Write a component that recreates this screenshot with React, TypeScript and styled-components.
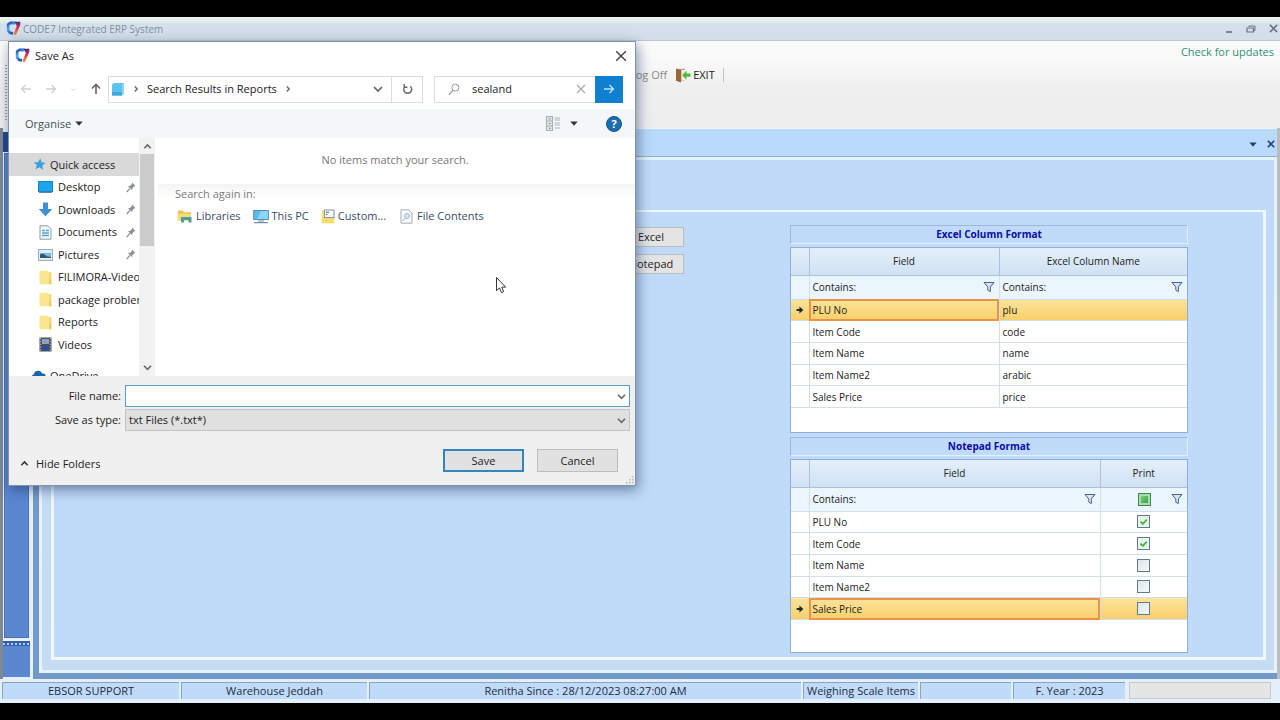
import React from "react";
import styled, { createGlobalStyle } from "styled-components";

const Global = createGlobalStyle`
  * { box-sizing: border-box; }
  body { margin: 0; background: #000; }
  body, button, input, select, table { font: 11px/16px "Open Sans", "Noto Sans", sans-serif; color: #222; }
  button { cursor: default; padding: 0; }
`;

/* ---------- application shell ---------- */

const Shell = styled.div`
  position: relative;
  display: flex;
  flex-direction: column;
  min-height: 100vh;
  padding: 17px 0;
`;

const TitleBar = styled.header`
  display: flex;
  align-items: center;
  height: 24px;
  padding: 0 1px 0 6px;
  gap: 2px;
  border-bottom: 1px solid #b9c9d6;
  background: linear-gradient(#e9f3f1 0, #e3ece9 5px, #d6e0ea 7px, #d2dee9 100%);
  color: #7d909f;
  font-size: 10px;
`;

const Grow = styled.span`
  flex: 1;
`;

const WindowButtons = styled.div`
  display: flex;
  gap: 10px;
`;

const GlyphButton = styled.button<{ $size?: number }>`
  display: flex;
  align-items: center;
  justify-content: center;
  flex: none;
  width: ${(p) => p.$size ?? 12}px;
  height: ${(p) => p.$size ?? 12}px;
  border: 0;
  background: none;
`;

const Ribbon = styled.div`
  display: flex;
  height: 87px;
  padding: 0 6px 0 5px;
  background: linear-gradient(#fbfbfb 0, #fafafa 18px, #efefef 45px, #eeeeee 100%);
`;

const Grip = styled.div`
  width: 2px;
  margin: 24px 623px 8px 0;
  background: repeating-linear-gradient(#9a9a9a 0 1px, transparent 1px 3px);
`;

const RibbonTools = styled.div`
  display: flex;
  align-items: center;
  height: 16px;
  margin-top: 26px;
`;

const ToolButton = styled.button<{ $faded?: boolean }>`
  display: flex;
  align-items: center;
  gap: 2px;
  margin-right: 8px;
  border: 0;
  background: none;
  color: ${(p) => (p.$faded ? "#8b8b8b" : "#222")};
`;

const Divider = styled.span`
  width: 1px;
  height: 14px;
  background: #c4c4c4;
`;

const UpdateLink = styled.a`
  margin-top: 3px;
  color: #2f9079;
  text-decoration: none;
`;

const Workspace = styled.main`
  display: flex;
  flex: 1;
`;

const Dock = styled.aside`
  display: flex;
  flex-direction: column;
  flex: none;
  width: 33px;
  padding: 4px 3px 2px 0;
  border-left: 3px solid #7f8793;
  background: #e6f0fb;
`;

const DockHead = styled.div`
  height: 20px;
  background: #21468f;
`;

const DockBody = styled.div`
  flex: 1;
  margin: 1px 1px 3px;
  border: 1px solid #4a72b8;
  background: #5a87d0;
`;

const DockSplit = styled.div`
  height: 5px;
  background: repeating-linear-gradient(90deg, #b9cdf0 0 2px, transparent 2px 4px) 0 2px / 100% 2px no-repeat, #335fae;
`;

const DockFoot = styled.div`
  height: 31px;
  background: #5a87d0;
`;

const DocColumn = styled.section`
  display: flex;
  flex-direction: column;
  flex: 1;
  border-right: 3px solid #b9bdc0;
`;

const TabStrip = styled.div`
  display: flex;
  align-items: center;
  justify-content: flex-end;
  gap: 6px;
  height: 29px;
  padding-top: 3px;
  border-top: 1px solid #e9f4fd;
  border-bottom: 1px solid #90aecf;
  background: #b9dafa;
`;

const DocFrame = styled.div`
  display: flex;
  flex: 1;
  border: solid #7399c8;
  border-width: 0 0 6px 6px;
`;

const DocPage = styled.div`
  display: flex;
  flex: 1;
  padding: 50px 8px 10px 9px;
  border: 3px solid #e6f3fd;
  background: linear-gradient(#c0daf7 0, #c0daf7 60px, #c6dcf3 100%);
`;

const GroupPanel = styled.div`
  display: flex;
  justify-content: space-between;
  flex: 1;
  padding: 13px 75px 4px 0;
  border: 3px solid #eef8fe;
  border-top-width: 2px;
  background: #c0dbf9;
`;

const ActionColumn = styled.div`
  display: flex;
  flex-direction: column;
  align-items: flex-end;
  gap: 7px;
  width: 630px;
  padding-top: 2px;
`;

const ActionButton = styled.button`
  width: 66px;
  height: 20px;
  border: 1px solid #b9bcc0;
  background: #e4e4e4;
`;

const GridColumn = styled.div`
  display: flex;
  flex-direction: column;
  flex: none;
  width: 398px;
  gap: 4px;
`;

const GridGroup = styled.section`
  display: flex;
  flex-direction: column;
  gap: 3px;
`;

const GridTitle = styled.h2`
  height: 19px;
  margin: 0;
  border: solid;
  border-width: 1px;
  border-color: #9db7d6 #e2f0fd #e2f0fd #9db7d6;
  font-size: 10px;
  line-height: 17px;
  font-weight: 700;
  text-align: center;
  color: #0b0ba8;
`;

const GridBox = styled.div<{ $h: number }>`
  height: ${(p) => p.$h}px;
  border: 1px solid #8fafd6;
  background: #fff;
`;

const Grid = styled.table`
  width: 100%;
  height: 160px;
  border-collapse: collapse;
  table-layout: fixed;

  col.mark { width: 18px; }
  col.name { width: 188px; }
  col.print { width: 87px; }

  th, td {
    padding: 0 0 0 3px;
    border: solid #d3e0ea;
    border-width: 0 1px 1px 0;
    font-size: 10px;
    line-height: 14px;
  }
  th { padding: 0; }
  tr > :last-child { border-right: 0; }
`;

const HeadRow = styled.tr`
  height: 27px;
  background: linear-gradient(#e4effa, #cfe1f4);
  th {
    font-weight: 400;
    border-color: #adc2d8;
  }
`;

const FilterRow = styled.tr`
  height: 24px;
  background: #eaf5fd;
`;

const FilterCell = styled.div<{ $center?: boolean }>`
  display: flex;
  align-items: center;
  justify-content: space-between;
  padding: 0 4px 0 ${(p) => (p.$center ? 34 : 0)}px;
`;

const DataRow = styled.tr<{ $active?: boolean }>`
  background: ${(p) => (p.$active ? "linear-gradient(#fbe39c, #f8cf68)" : "#fff")};
  td:nth-child(2) {
    outline: ${(p) => (p.$active ? "2px solid #e99349" : "none")};
    outline-offset: -2px;
  }
  td:first-child { padding: 0 0 0 5px; }
  td svg { display: block; }
`;

const CheckCell = styled.td`
  && { padding: 0; text-align: center; }
`;

const Tick = styled.input`
  appearance: none;
  display: block;
  width: 13px;
  height: 13px;
  margin: 0 auto;
  border: 1px solid #5f7c93;
  background: linear-gradient(135deg, #dde4ea, #f7f9fa);
  &:checked {
    background: url("data:image/svg+xml,%3Csvg xmlns='http://www.w3.org/2000/svg' viewBox='0 0 11 11'%3E%3Cpath d='M2.5 5.5l2.3 2.3L8.8 3.6' fill='none' stroke='%2345b845' stroke-width='1.9'/%3E%3C/svg%3E") #eaf5ea;
  }
  &.mixed {
    margin: 0;
    border-color: #3d8a4c;
    background: linear-gradient(135deg, #7fd07f, #35a045) 2px 2px / 7px 7px no-repeat, #a9dcae;
  }
`;

const StatusBar = styled.footer`
  display: flex;
  gap: 2px;
  height: 24px;
  padding: 3px 9px 4px 2px;
  background: #e3effa;
`;

const StatusCell = styled.div<{ $w?: number }>`
  flex: ${(p) => (p.$w ? `0 0 ${p.$w}px` : "1 1 0")};
  border: solid #8ea3b9;
  border-width: 1px 0 0 1px;
  background: #c0dbf9;
  text-align: center;
  white-space: nowrap;
  color: #1d2c44;
`;

const StatusProgress = styled.div`
  flex: 0 0 142px;
  margin-left: 2px;
  border: 1px solid #c9c9c9;
  background: #e5e5e5;
`;

/* ---------- save dialog ---------- */

const Dialog = styled.div`
  position: absolute;
  left: 8px;
  top: 41px;
  display: flex;
  flex-direction: column;
  width: 628px;
  border: 1px solid #8493a5;
  background: #fff;
  box-shadow: 2px 4px 12px rgba(20, 40, 80, 0.5);
`;

const DialogTitle = styled.div`
  display: flex;
  align-items: center;
  gap: 5px;
  height: 27px;
  padding: 0 6px;
`;

const NavRow = styled.div`
  display: flex;
  align-items: center;
  height: 40px;
  padding: 0 12px 0 11px;
`;

const NavButtons = styled.div`
  display: flex;
  align-items: center;
  justify-content: space-between;
  flex: none;
  width: 82px;
  margin-right: 6px;
`;

const AddressBar = styled.div`
  display: flex;
  align-items: center;
  gap: 7px;
  flex: none;
  width: 284px;
  height: 27px;
  padding: 0 8px 0 2px;
  border: 1px solid #dcdcdc;
`;

const Refresh = styled.button`
  display: flex;
  align-items: center;
  justify-content: center;
  flex: none;
  width: 32px;
  height: 27px;
  margin: 0 11px 0 -1px;
  border: 1px solid #dcdcdc;
  background: #fff;
`;

const SearchBox = styled.div`
  display: flex;
  align-items: center;
  gap: 12px;
  flex: 1;
  min-width: 0;
  height: 27px;
  padding-left: 13px;
  border: 1px solid #dcdcdc;
`;

const SearchInput = styled.input`
  flex: 1;
  min-width: 0;
  padding: 0;
  border: 0;
  outline: 0;
  background: none;
`;

const GoButton = styled.button`
  display: flex;
  align-items: center;
  justify-content: center;
  flex: none;
  width: 28px;
  height: 27px;
  margin: 0 -1px 0 -4px;
  border: 0;
  background: #0f7fd0;
`;

const CommandBar = styled.div`
  display: flex;
  align-items: center;
  gap: 7px;
  height: 29px;
  padding: 0 13px 0 16px;
  background: #f4f7f7;
`;

const OrganiseButton = styled.button`
  display: flex;
  align-items: center;
  gap: 4px;
  border: 0;
  background: none;
  color: #44505a;
`;

const HelpButton = styled.button`
  width: 16px;
  height: 16px;
  margin-left: 19px;
  border: 1px solid #16558e;
  border-radius: 50%;
  background: #1b6fae;
  color: #fff;
  font-weight: 700;
  line-height: 14px;
`;

const Browser = styled.div`
  display: flex;
  height: 238px;
`;

const FolderPane = styled.nav`
  width: 130px;
  padding-top: 15px;
  overflow: hidden;
`;

const FolderList = styled.ul`
  display: grid;
  grid-template-columns: minmax(0, 1fr);
  grid-auto-rows: 1fr;
  height: 203px;
  margin: 0;
  padding: 0;
  list-style: none;
`;

const FolderRow = styled.li<{ $root?: boolean; $selected?: boolean }>`
  display: flex;
  align-items: center;
  gap: ${(p) => (p.$root ? 4 : 5)}px;
  height: ${(p) => (p.$root ? "23px" : "auto")};
  padding: 0 3px 0 ${(p) => (p.$root ? 24 : 29)}px;
  background: ${(p) => (p.$selected ? "#d9d9d9" : "none")};
  white-space: nowrap;
  svg { flex: none; }
`;

const FolderName = styled.span`
  flex: 1;
  min-width: 0;
`;

const CloudRow = styled(FolderRow)`
  margin-top: 8px;
  padding-left: 22px;
`;

const ScrollTrack = styled.div`
  display: flex;
  flex-direction: column;
  align-items: center;
  width: 16px;
  padding: 4px 0;
  background: #f2f2f2;
`;

const ScrollThumb = styled.div`
  width: 14px;
  height: 92px;
  margin: 3px 0 auto;
  background: #cbcbcb;
`;

const Results = styled.div`
  flex: 1;
`;

const EmptyNote = styled.p`
  height: 46px;
  margin: 0;
  padding-top: 14px;
  text-align: center;
  color: #777;
`;

const SearchAgain = styled.div`
  margin-left: 3px;
  padding: 2px 17px;
  background: linear-gradient(#f4f4f4, #fff 14px);
  color: #7b7b7b;
`;

const PlaceRow = styled.div`
  display: flex;
  gap: 12px;
  margin-top: 6px;
  padding-left: 2px;
`;

const Place = styled.button`
  display: flex;
  align-items: center;
  gap: 3px;
  border: 0;
  background: none;
  color: #3c4b66;
`;

const DialogFoot = styled.div`
  position: relative;
  height: 109px;
  padding: 8px 5px 0 11px;
  background: #f0f0f0;
`;

const Field = styled.div`
  display: grid;
  grid-template-columns: 101px 1fr;
  align-items: center;
  gap: 4px;
  height: 24px;
  label { text-align: right; }
`;

const Combo = styled.div`
  display: grid;
  align-items: center;
  > * { grid-area: 1 / 1; }
  > svg { justify-self: end; margin-right: 4px; pointer-events: none; }
`;

const NameInput = styled.input`
  width: 100%;
  height: 22px;
  border: 1px solid #5a9fc0;
  outline: 0;
  background: #fff;
`;

const TypeSelect = styled.select`
  appearance: none;
  width: 100%;
  height: 22px;
  padding: 0 3px;
  border: 1px solid #c2c2c2;
  border-radius: 0;
  background: #e0e0e0;
`;

const FootActions = styled.div`
  display: flex;
  align-items: center;
  gap: 13px;
  padding: 17px 12px 0 0;
`;

const HideButton = styled.button`
  display: flex;
  align-items: center;
  gap: 7px;
  margin: 6px auto 0 0;
  border: 0;
  background: none;
`;

const PushButton = styled.button<{ $primary?: boolean }>`
  width: 81px;
  height: 23px;
  border: ${(p) => (p.$primary ? "2px solid #3585bd" : "1px solid #bdbdbd")};
  background: #e1e1e1;
`;

const SizeGrip = styled.svg`
  position: absolute;
  right: 1px;
  bottom: 1px;
`;

const Pointer = styled.svg`
  position: absolute;
  left: 495px;
  top: 276px;
`;

/* ---------- icons ---------- */

const Logo = ({ id }: { id: string }) => (
  <svg width="15" height="15" viewBox="0 0 15 15">
    <defs>
      <linearGradient id={`${id}C`} x1="0" y1="0" x2="0.4" y2="1">
        <stop offset="0" stopColor="#1f4fb4" />
        <stop offset="0.5" stopColor="#49b4ee" />
        <stop offset="1" stopColor="#1a57c4" />
      </linearGradient>
      <linearGradient id={`${id}S`} x1="0" y1="0" x2="0" y2="1">
        <stop offset="0" stopColor="#3a2a86" />
        <stop offset="0.4" stopColor="#d8304e" />
        <stop offset="1" stopColor="#f2953a" />
      </linearGradient>
    </defs>
    <path d="M9.500 2H4.200L2.200 3.600V9.600L4.200 11.800 7 12.400" fill="none" stroke={`url(#${id}C)`} strokeWidth="2.800" strokeLinejoin="round" />
    <path d="M8.500.7h5.800v3.200L9.800 14.200l-2.400-.6L10.800 5z" fill={`url(#${id}S)`} />
  </svg>
);

const Cross = ({ size = 10, color = "#444", w = 1.2 }: { size?: number; color?: string; w?: number }) => (
  <svg width={size} height={size} viewBox="0 0 10 10">
    <path d="M1 1l8 8M9 1l-8 8" stroke={color} strokeWidth={w} />
  </svg>
);

const Chevron = ({ dir, size = 9, color = "#666" }: { dir: "up" | "down" | "right"; size?: number; color?: string }) => (
  <svg width={size} height={size} viewBox="0 0 10 10">
    <path
      d={dir === "up" ? "M1.5 7 5 3.3 8.5 7" : dir === "down" ? "M1 3l4 4 4-4" : "M3.5 2 6.5 5 3.5 8"}
      fill="none"
      stroke={color}
      strokeWidth="1.7"
    />
  </svg>
);

const Caret = ({ color = "#333" }: { color?: string }) => (
  <svg width="8" height="5" viewBox="0 0 8 5">
    <path d="M0.3 0.5h7.4L4 4.8z" fill={color} />
  </svg>
);

const Arrow = ({ dir, color }: { dir: "left" | "right" | "up"; color: string }) => (
  <svg width="12" height="12" viewBox="0 0 12 12">
    <g transform={`rotate(${dir === "left" ? 180 : dir === "up" ? -90 : 0} 6 6)`}>
      <path d="M1 6h9.5M6.5 2l4 4-4 4" fill="none" stroke={color} strokeWidth={dir === "up" ? 1.6 : 1.3} />
    </g>
  </svg>
);

const Funnel = () => (
  <svg width="12" height="12" viewBox="0 0 12 12">
    <path d="M1 1.5h10L7.4 6v4.6l-2.6-1.4V6z" fill="#d7e6f6" stroke="#4b6587" />
    <path d="M6.8 6l3.2-4" stroke="#8ca6c4" />
  </svg>
);

const RowMark = () => (
  <svg width="8" height="8" viewBox="0 0 8 8">
    <path d="M3.4 0.6 7.4 4 3.4 7.4V5.1H0.6V2.9h2.8z" fill="#1c2a33" />
  </svg>
);

const Pin = () => (
  <svg width="10" height="11" viewBox="0 0 10 11">
    <path d="M6 0.6 9.4 4 8 4.4 6.4 6.2 6.2 8.2 2 4.2 4.2 3.8 5.8 2.2z" fill="#8a9096" />
    <path d="M3.8 6.4.8 10" stroke="#8a9096" strokeWidth="1.2" />
  </svg>
);

const Star = () => (
  <svg width="13" height="13" viewBox="0 0 13 13">
    <path d="M7.3 0.5 8.6 4.2 12.6 5 9.4 7.3 9.8 12 6.6 9.2 2.4 11.3 4 7.2.6 4.6 5 4.3z" fill="#3ba0de" />
  </svg>
);

const Desktop = () => (
  <svg width="15" height="12" viewBox="0 0 15 12">
    <rect x="0.5" y="0.5" width="14" height="10" fill="#1ea5ec" stroke="#1b83c4" />
    <path d="M1 11.4h13" stroke="#3f7fa8" />
  </svg>
);

const Down = () => (
  <svg width="15" height="15" viewBox="0 0 15 15">
    <path d="M5 0.5h5V7h4.3L7.5 14.3.7 7H5z" fill="#3d8fd6" />
  </svg>
);

const Doc = () => (
  <svg width="15" height="15" viewBox="0 0 15 15">
    <path d="M2 .8h8l3 3v10.4H2z" fill="#f2f7fb" stroke="#8d9dab" />
    <path d="M4 5.5h3M4 8h7M4 10.5h7M8 5.5h3" stroke="#5aa3cc" strokeWidth="1.3" />
  </svg>
);

const Picture = () => (
  <svg width="15" height="12" viewBox="0 0 15 12">
    <rect x="0.5" y="0.5" width="14" height="11" fill="#dfeef8" stroke="#98aebf" />
    <rect x="2" y="4" width="11" height="3" fill="#7db7dc" />
    <path d="M2 5.5 5 4.6l4 2.6 4 .3V9H2z" fill="#2f5878" />
  </svg>
);

const Folder = () => (
  <svg width="15" height="15" viewBox="0 0 15 15">
    <path d="M1.5.8h9v1.4h2.8v12H1.5z" fill="#f9e78f" />
    <path d="M11 9.500l2.300-1.500v6.200H11z" fill="#eccb62" />
    <path d="M11 2.200h2.300V8L11 9.500z" fill="#f3d978" />
  </svg>
);

const Video = () => (
  <svg width="15" height="15" viewBox="0 0 15 15">
    <rect x="1.5" y="0.5" width="12" height="14" fill="#4a5058" />
    <rect x="4" y="2" width="7" height="5" fill="#8fa3b8" />
    <rect x="4" y="8.5" width="7" height="5" fill="#304d9a" />
    <path d="M2.7 1v13M12.3 1v13" stroke="#b9bec4" strokeDasharray="1.4 1.4" />
  </svg>
);

const Cloud = () => (
  <svg width="15" height="11" viewBox="0 0 15 11">
    <path d="M3 10a3 3 0 0 1-.2-5.800A4.500 4.500 0 0 1 11.300 3.600a3.200 3.200 0 0 1 .7 6.400z" fill="#1767a8" />
  </svg>
);

const ReportsIcon = () => (
  <svg width="14" height="15" viewBox="0 0 14 15">
    <path d="M1 2.500 3 1h10v11l-2 1.500H1z" fill="#5cc3ec" />
    <path d="M11 2.500 13 1v11l-2 1.500z" fill="#8bd8f4" />
    <path d="M1 10h10v3.500H1z" fill="#3fa9dc" />
  </svg>
);

const RefreshIcon = () => (
  <svg width="11" height="12" viewBox="0 0 11 12">
    <path d="M8.200 3.200A4 4 0 1 1 3.200 3.200M2.200 1v3.200h3.200" fill="none" stroke="#666" strokeWidth="1.400" />
  </svg>
);

const Lens = () => (
  <svg width="12" height="13" viewBox="0 0 12 13">
    <circle cx="7.400" cy="4.600" r="3.500" fill="none" stroke="#999" />
    <path d="M5 7.200.8 11.800" stroke="#999" strokeWidth="1.200" />
  </svg>
);

const ViewIcon = () => (
  <svg width="15" height="15" viewBox="0 0 15 15">
    <rect x="0.5" y="0.5" width="6" height="14" fill="#dfe3e6" stroke="#a9b0b5" />
    <path d="M.5 5h6M.5 10h6" stroke="#a9b0b5" />
    <path d="M3 2.800h1.500M3 7.500h1.500M3 12.300h1.500" stroke="#6e8b7a" />
    <path d="M8.500 2h5.500M8.500 4h5.500M8.500 7h5.500M8.500 9h5.500M8.500 12h5.500" stroke="#a7b7c6" />
  </svg>
);

const ExitIcon = () => (
  <svg width="16" height="15" viewBox="0 0 16 15">
    <path d="M1 .8h9v12H1z" fill="#c9a079" />
    <path d="M1 .8 6 2v12.500L1 12.800z" fill="#9a6437" />
    <path d="M6.500 2h3.500v10.500H6.500z" fill="#f1ece6" />
    <path d="M7.200 7.200 11.500 2.600v3h4v3.200h-4v3z" fill="#4cba3d" />
  </svg>
);

const Libraries = () => (
  <svg width="16" height="15" viewBox="0 0 16 15">
    <path d="M.8 1.500h5L7 3.200h7v8H.8z" fill="#ecc54e" />
    <path d="M.8 4.800H14v7H.8z" fill="#f8dc7a" />
    <path d="M4 13.500V8h10.500v5.500h-3V11H7v2.500z" fill="#4f9c9e" />
  </svg>
);

const ThisPc = () => (
  <svg width="16" height="15" viewBox="0 0 16 15">
    <rect x="0.700" y="1.500" width="14.600" height="9" fill="#53bdf0" stroke="#5b8cab" />
    <path d="M8 2h6.800v8H4z" fill="#8ad6f7" />
    <path d="M5 12h6M1 13.700h14" stroke="#7292a8" strokeWidth="1.200" />
  </svg>
);

const Custom = () => (
  <svg width="14" height="15" viewBox="0 0 14 15">
    <path d="M.8 1.500h8v1.200h4.400v11.500H.8z" fill="#f5dc6d" />
    <rect x="3.500" y="1" width="9.500" height="7.500" fill="#f4f7f9" stroke="#8696a4" />
    <path d="M5 3.300h3M5 5.500h1.500" stroke="#4a6a88" />
  </svg>
);

const Contents = () => (
  <svg width="16" height="15" viewBox="-2 0 16 15">
    <path d="M1 .8h7.500L12 4v10.200H1z" fill="#f7fafc" stroke="#a4adb4" />
    <circle cx="7" cy="7" r="2.500" fill="#d5e7f3" stroke="#a5bccd" />
    <path d="M5.200 9 2.600 12" stroke="#a5bccd" />
  </svg>
);

/* ---------- data ---------- */

const excelRows = [
  ["PLU No", "plu"],
  ["Item Code", "code"],
  ["Item Name", "name"],
  ["Item Name2", "arabic"],
  ["Sales Price", "price"],
];

const printRows: [string, boolean][] = [
  ["PLU No", true],
  ["Item Code", true],
  ["Item Name", false],
  ["Item Name2", false],
  ["Sales Price", false],
];

const folders: { name: string; icon: React.ReactNode; pinned?: boolean }[] = [
  { name: "Desktop", icon: <Desktop />, pinned: true },
  { name: "Downloads", icon: <Down />, pinned: true },
  { name: "Documents", icon: <Doc />, pinned: true },
  { name: "Pictures", icon: <Picture />, pinned: true },
  { name: "FILIMORA-Video", icon: <Folder /> },
  { name: "package problem", icon: <Folder /> },
  { name: "Reports", icon: <Folder /> },
  { name: "Videos", icon: <Video /> },
];

/* ---------- views ---------- */

const ExcelGrid = () => (
  <GridGroup>
    <GridTitle>Excel Column Format</GridTitle>
    <GridBox $h={186}>
      <Grid>
        <colgroup>
          <col className="mark" />
          <col />
          <col className="name" />
        </colgroup>
        <thead>
          <HeadRow>
            <th />
            <th>Field</th>
            <th>Excel Column Name</th>
          </HeadRow>
          <FilterRow>
            <td />
            <td><FilterCell>Contains:<Funnel /></FilterCell></td>
            <td><FilterCell>Contains:<Funnel /></FilterCell></td>
          </FilterRow>
        </thead>
        <tbody>
          {excelRows.map(([field, column], i) => (
            <DataRow key={field} $active={i === 0}>
              <td>{i === 0 && <RowMark />}</td>
              <td>{field}</td>
              <td>{column}</td>
            </DataRow>
          ))}
        </tbody>
      </Grid>
    </GridBox>
  </GridGroup>
);

const NotepadGrid = () => (
  <GridGroup>
    <GridTitle>Notepad Format</GridTitle>
    <GridBox $h={194}>
      <Grid>
        <colgroup>
          <col className="mark" />
          <col />
          <col className="print" />
        </colgroup>
        <thead>
          <HeadRow>
            <th />
            <th>Field</th>
            <th>Print</th>
          </HeadRow>
          <FilterRow>
            <td />
            <td><FilterCell>Contains:<Funnel /></FilterCell></td>
            <td>
              <FilterCell $center>
                <Tick type="checkbox" className="mixed" aria-label="Filter by print" />
                <Funnel />
              </FilterCell>
            </td>
          </FilterRow>
        </thead>
        <tbody>
          {printRows.map(([field, on], i) => (
            <DataRow key={field} $active={i === 4}>
              <td>{i === 4 && <RowMark />}</td>
              <td>{field}</td>
              <CheckCell>
                <Tick type="checkbox" defaultChecked={on} aria-label={`Print ${field}`} />
              </CheckCell>
            </DataRow>
          ))}
        </tbody>
      </Grid>
    </GridBox>
  </GridGroup>
);

const SaveDialog = () => (
  <Dialog role="dialog" aria-label="Save As">
    <DialogTitle>
      <Logo id="dialogLogo" />
      Save As
      <Grow />
      <GlyphButton $size={16} aria-label="Close"><Cross size={12} /></GlyphButton>
    </DialogTitle>
    <NavRow>
      <NavButtons>
        <GlyphButton aria-label="Back"><Arrow dir="left" color="#d0d0d0" /></GlyphButton>
        <GlyphButton aria-label="Forward"><Arrow dir="right" color="#d0d0d0" /></GlyphButton>
        <GlyphButton $size={6} aria-label="Recent"><Chevron dir="down" size={5} color="#ccc" /></GlyphButton>
        <GlyphButton aria-label="Up"><Arrow dir="up" color="#666" /></GlyphButton>
      </NavButtons>
      <AddressBar>
        <ReportsIcon />
        <Chevron dir="right" size={8} />
        Search Results in Reports
        <Chevron dir="right" size={8} />
        <Grow />
        <Chevron dir="down" size={10} />
      </AddressBar>
      <Refresh aria-label="Refresh"><RefreshIcon /></Refresh>
      <SearchBox>
        <Lens />
        <SearchInput aria-label="Search" defaultValue="sealand" />
        <GlyphButton aria-label="Clear"><Cross color="#aaa" /></GlyphButton>
        <GoButton aria-label="Search now"><Arrow dir="right" color="#bfe2f8" /></GoButton>
      </SearchBox>
    </NavRow>
    <CommandBar>
      <OrganiseButton>Organise <Caret /></OrganiseButton>
      <Grow />
      <GlyphButton $size={16} aria-label="Change view"><ViewIcon /></GlyphButton>
      <GlyphButton aria-label="View options"><Caret /></GlyphButton>
      <HelpButton aria-label="Help">?</HelpButton>
    </CommandBar>
    <Browser>
      <FolderPane>
        <FolderList>
          <FolderRow $root $selected><Star />Quick access</FolderRow>
          {folders.map((f) => (
            <FolderRow key={f.name}>
              {f.icon}
              <FolderName>{f.name}</FolderName>
              {f.pinned && <Pin />}
            </FolderRow>
          ))}
        </FolderList>
        <CloudRow as="div" $root><Cloud />OneDrive</CloudRow>
      </FolderPane>
      <ScrollTrack>
        <Chevron dir="up" />
        <ScrollThumb />
        <Chevron dir="down" />
      </ScrollTrack>
      <Results>
        <EmptyNote>No items match your search.</EmptyNote>
        <SearchAgain>
          Search again in:
          <PlaceRow>
            <Place><Libraries />Libraries</Place>
            <Place><ThisPc />This PC</Place>
            <Place><Custom />Custom...</Place>
            <Place><Contents />File Contents</Place>
          </PlaceRow>
        </SearchAgain>
      </Results>
    </Browser>
    <DialogFoot>
      <Field>
        <label htmlFor="file-name">File name:</label>
        <Combo>
          <NameInput id="file-name" />
          <Chevron dir="down" />
        </Combo>
      </Field>
      <Field>
        <label htmlFor="file-type">Save as type:</label>
        <Combo>
          <TypeSelect id="file-type">
            <option>txt Files (*.txt*)</option>
          </TypeSelect>
          <Chevron dir="down" />
        </Combo>
      </Field>
      <FootActions>
        <HideButton><Chevron dir="up" color="#333" />Hide Folders</HideButton>
        <PushButton $primary>Save</PushButton>
        <PushButton>Cancel</PushButton>
      </FootActions>
      <SizeGrip width="9" height="9" viewBox="0 0 9 9">
        <path d="M7 1h1.500v1.500H7zM7 4h1.500v1.500H7zM4 4h1.500v1.500H4zM7 7h1.500v1.500H7zM4 7h1.500v1.500H4zM1 7h1.500v1.500H1z" fill="#b5b5b5" />
      </SizeGrip>
    </DialogFoot>
  </Dialog>
);

export default function App() {
  return (
    <>
      <Global />
      <Shell>
        <TitleBar>
          <Logo id="appLogo" />
          CODE7 Integrated ERP System
          <Grow />
          <WindowButtons>
            <GlyphButton aria-label="Minimise">
              <svg width="10" height="10" viewBox="0 0 10 10"><path d="M2 8h6" stroke="#66737f" strokeWidth="1.600" /></svg>
            </GlyphButton>
            <GlyphButton aria-label="Restore">
              <svg width="10" height="10" viewBox="0 0 10 10">
                <path d="M3 3V2h6v4.500H8" fill="none" stroke="#66737f" />
                <path d="M1 4h6.500v4H1z" fill="none" stroke="#66737f" strokeWidth="1.200" />
              </svg>
            </GlyphButton>
            <GlyphButton aria-label="Close window"><Cross size={9} color="#66737f" w={1.7} /></GlyphButton>
          </WindowButtons>
        </TitleBar>
        <Ribbon>
          <Grip />
          <RibbonTools>
            <ToolButton $faded>Log Off</ToolButton>
            <ToolButton><ExitIcon />EXIT</ToolButton>
            <Divider />
          </RibbonTools>
          <Grow />
          <UpdateLink href="#updates">Check for updates</UpdateLink>
        </Ribbon>
        <Workspace>
          <Dock>
            <DockHead />
            <DockBody />
            <DockSplit />
            <DockFoot />
          </Dock>
          <DocColumn>
            <TabStrip>
              <GlyphButton aria-label="Open documents"><Caret color="#24407a" /></GlyphButton>
              <GlyphButton aria-label="Close document"><Cross size={8} color="#24407a" w={2} /></GlyphButton>
            </TabStrip>
            <DocFrame>
              <DocPage>
                <GroupPanel>
                  <ActionColumn>
                    <ActionButton>Excel</ActionButton>
                    <ActionButton>Notepad</ActionButton>
                  </ActionColumn>
                  <GridColumn>
                    <ExcelGrid />
                    <NotepadGrid />
                  </GridColumn>
                </GroupPanel>
              </DocPage>
            </DocFrame>
          </DocColumn>
        </Workspace>
        <StatusBar>
          <StatusCell $w={177}>EBSOR SUPPORT</StatusCell>
          <StatusCell $w={186}>Warehouse Jeddah</StatusCell>
          <StatusCell>Renitha Since : 28/12/2023 08:27:00 AM</StatusCell>
          <StatusCell $w={115}>Weighing Scale Items</StatusCell>
          <StatusCell $w={91}>&nbsp;</StatusCell>
          <StatusCell $w={112}>F. Year : 2023</StatusCell>
          <StatusProgress />
        </StatusBar>
        <SaveDialog />
        <Pointer width="12" height="19" viewBox="0 0 12 19">
          <path d="M1.500 1.500v13.200l3-2.800 2 4.800 2.200-1-2-4.600h4z" fill="#fff" stroke="#333" />
        </Pointer>
      </Shell>
    </>
  );
}
